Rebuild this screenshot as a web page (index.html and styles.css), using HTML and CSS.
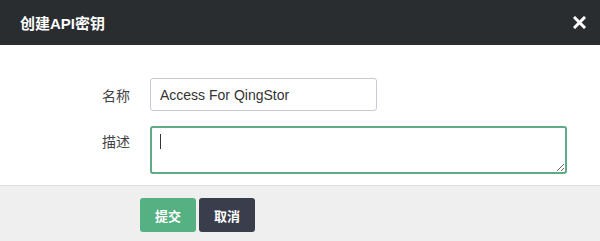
FILE: index.html
```html
<!DOCTYPE html>
<html lang="zh">
<head>
<meta charset="utf-8">
<link rel="stylesheet" href="styles.css">
</head>
<body>
<div class="modal">
  <div class="modal-header">
    <span class="title">创建API密钥</span>
    <svg class="close" width="13" height="13" viewBox="0 0 13 13"><path d="M2 2 L11 11 M11 2 L2 11" stroke="#fff" stroke-width="3" stroke-linecap="square"/></svg>
  </div>
  <div class="modal-body">
    <div class="row">
      <label class="label">名称</label>
      <input class="input" type="text" value="Access For QingStor">
    </div>
    <div class="row">
      <label class="label label-top">描述</label>
      <div class="ta-wrap">
        <textarea class="textarea"></textarea>
        <span class="caret"></span>
      </div>
    </div>
  </div>
  <div class="modal-footer">
    <button class="btn btn-primary">提交</button>
    <button class="btn btn-dark">取消</button>
  </div>
</div>
</body>
</html>
```

FILE: styles.css
```css
html, body {
  margin: 0;
  padding: 0;
  background: #fff;
  font-family: "Liberation Sans", "Noto Sans CJK SC", sans-serif;
}
.modal {
  width: 600px;
  height: 241px;
  display: flex;
  flex-direction: column;
}
.modal-header {
  height: 45px;
  background: #2a2d2f;
  display: flex;
  align-items: center;
  justify-content: space-between;
  padding: 0 14px 0 20px;
  box-sizing: border-box;
}
.title {
  color: #fff;
  font-size: 15px;
  font-weight: bold;
  font-family: "Liberation Sans", "Noto Sans CJK SC", sans-serif;
}
.close {
  display: block;
}
.modal-body {
  padding: 33px 0 11px 0;
  display: flex;
  flex-direction: column;
  gap: 15px;
}
.row {
  display: flex;
  align-items: center;
}
.label {
  width: 130px;
  padding-right: 20px;
  text-align: right;
  font-size: 14px;
  color: #444;
  font-family: "Noto Sans CJK SC", sans-serif;
}
.label-top {
  align-self: flex-start;
  padding-top: 5px;
}
.input {
  box-sizing: border-box;
  width: 227px;
  height: 33px;
  border: 1px solid #c9c9d6;
  border-radius: 3px;
  padding: 0 9px;
  font-size: 14px;
  color: #333;
  font-family: "Liberation Sans", sans-serif;
  outline: none;
}
.ta-wrap {
  position: relative;
}
.textarea {
  display: block;
  box-sizing: border-box;
  width: 417px;
  height: 48px;
  border: 2px solid #5eab85;
  border-radius: 3px;
  outline: none;
  margin: 0;
  padding: 6px 9px;
  font-size: 14px;
}
.caret {
  position: absolute;
  left: 10px;
  top: 8px;
  width: 1px;
  height: 15px;
  background: #333;
}
.modal-footer {
  flex: 1;
  background: #efefef;
  border-top: 1px solid #dcdcdc;
  padding: 12px 0 0 140px;
  display: flex;
  align-items: flex-start;
  gap: 3px;
}
.btn {
  width: 56px;
  height: 34px;
  border: none;
  border-radius: 3px;
  color: #fff;
  font-size: 13px;
  font-weight: bold;
  font-family: "Noto Sans CJK SC", sans-serif;
  padding: 0;
}
.btn-primary {
  background: #55b182;
}
.btn-dark {
  background: #3a3d4b;
}
```
